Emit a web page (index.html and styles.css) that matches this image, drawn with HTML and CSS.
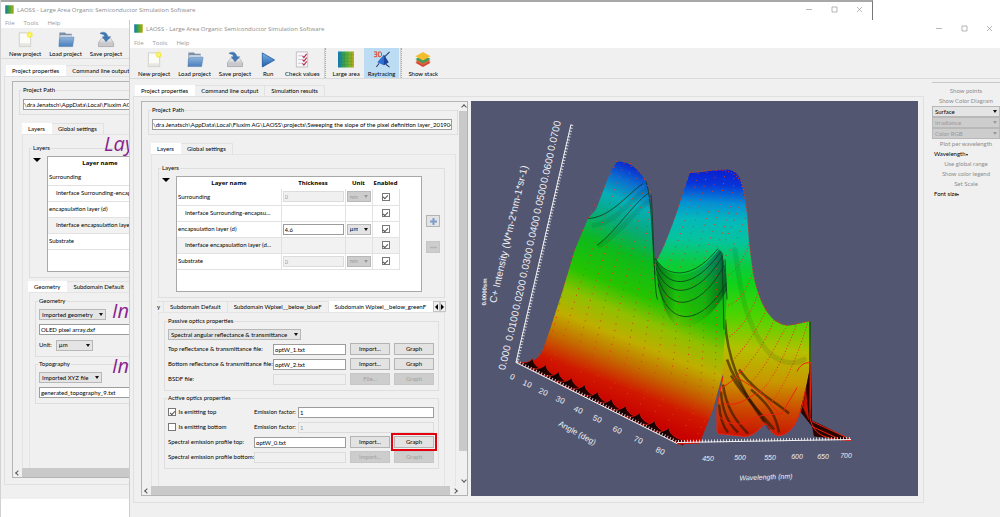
FILE: index.html
```
<!DOCTYPE html>
<html lang="en">
<head>
    <meta charset="utf-8">
    <title>LAOSS - Large Area Organic Semiconductor Simulation Software</title>
    <meta name="viewport" content="width=device-width, initial-scale=1.0">
    <link rel="stylesheet" href="styles.css">
</head>
<body>
    <!-- Shared icons -->
    <svg class="defs" width="0" height="0" aria-hidden="true">
        <defs>
            <linearGradient id="g-map" x1="0" x2="1"><stop offset="0" stop-color="#1377b8"/><stop offset=".35" stop-color="#2fa35c"/><stop offset=".7" stop-color="#7cb62c"/><stop offset="1" stop-color="#c9a81a"/></linearGradient>
            <linearGradient id="g-blue" x1="0" y1="0" x2="0" y2="1"><stop offset="0" stop-color="#7db5e6"/><stop offset="1" stop-color="#1d5fae"/></linearGradient>
            <linearGradient id="g-folder" x1="0" y1="0" x2="0" y2="1"><stop offset="0" stop-color="#8fb4dc"/><stop offset="1" stop-color="#4b7fbd"/></linearGradient>
            <linearGradient id="g-drive" x1="0" y1="0" x2="0" y2="1"><stop offset="0" stop-color="#f2f2f2"/><stop offset="1" stop-color="#a9a9ad"/></linearGradient>
            <radialGradient id="g-glow"><stop offset="0" stop-color="#fffbb0"/><stop offset=".5" stop-color="#f7ec3a"/><stop offset="1" stop-color="#f7ec3a" stop-opacity="0"/></radialGradient>
            <symbol id="i-new" viewBox="0 0 18 18">
                <path d="M3 2h12v14.500H3z" fill="#fbfbf8" stroke="#bdbdb8" stroke-width=".7"/>
                <path d="M3.500 13h11v3h-11z" fill="#e6e6e2"/>
                <circle cx="14" cy="4" r="4" fill="url(#g-glow)"/>
            </symbol>
            <symbol id="i-load" viewBox="0 0 18 18">
                <path d="M2 1.500h6l1 1.500h6V13H2z" fill="#7a8ea6"/>
                <path d="M3 4.500h12v3H3z" fill="#dfe6ee"/>
                <path d="M4 6.500h13.500l-1.500 10H1.500L2 9z" fill="url(#g-folder)" stroke="#4473aa" stroke-width=".5"/>
            </symbol>
            <symbol id="i-save" viewBox="0 0 18 18">
                <path d="M4 8h10l3 4.500v4H1v-4z" fill="url(#g-drive)" stroke="#8d8d92" stroke-width=".5"/>
                <path d="M1.500 13h15v3h-15z" fill="#c9c9cd"/>
                <path d="M3 2c4-2 7.500 0 8 4h3l-5 5.500L5 6h2.500C7 4 5.500 3 3 3z" fill="#3f78b5" stroke="#2a5c94" stroke-width=".4"/>
            </symbol>
            <symbol id="i-run" viewBox="0 0 18 18">
                <path d="M3 2l13 7.500L3 17z" fill="url(#g-blue)" stroke="#1c5196" stroke-width=".8"/>
            </symbol>
            <symbol id="i-check" viewBox="0 0 18 18">
                <path d="M3 1h12v16H3z" fill="#f7f7f9" stroke="#a9a9b0" stroke-width=".7"/>
                <path d="M5 5h4M5 9h4M5 13h4" stroke="#c8c8d2" stroke-width="1"/>
                <path d="M9.500 5l1.500 2 3-4M9.500 9l1.500 2 3-4M9.500 13l1.500 2 3-4" fill="none" stroke="#b3284a" stroke-width="1.200"/>
            </symbol>
            <symbol id="i-area" viewBox="0 0 18 18">
                <path d="M.500 .500h17v17H.500z" fill="url(#g-map)"/>
                <path d="M4 1v16M7.500 1v16M11 1v16M14.500 1v16M1 4h16M1 7.500h16M1 11h16M1 14.500h16" stroke="#3f7a2c" stroke-width=".4" opacity=".7"/>
            </symbol>
            <symbol id="i-ray" viewBox="0 0 18 18">
                <path d="M11 4l5 8-5 3-7-3z" fill="#2f6fd0"/>
                <path d="M11 4l5 8-5 3z" fill="#1a479c"/>
                <path d="M17 1l-5 5M6 13l-3 4M13 14l4 3" stroke="#2d3a63" stroke-width="1.100"/>
                <path d="M.500 1h3v5h-3M1 3.500h2.500M5.500 1v5h1.500L8.500 5V2L7 1z" fill="none" stroke="#d8432c" stroke-width="1"/>
            </symbol>
            <symbol id="i-stack" viewBox="0 0 18 18">
                <path d="M1 12.500l8-4 8 4-8 4.500z" fill="#d5402f"/>
                <path d="M1 10.500l8-4 8 4-8 4.500z" fill="#d9673c"/>
                <path d="M1 8.500l8-4 8 4-8 4.500z" fill="#3c9d5d"/>
                <path d="M1 5.500l8-4.500 8 4.500-8 4.500z" fill="#f3bd2d"/>
            </symbol>
        </defs>
    </svg>

    <div class="desktop">
        <!-- Window at the back -->
        <section class="window window-back">
            <header class="title-bar">
                <svg class="logo"><use href="#i-area"/></svg>
                <span class="title">LAOSS - Large Area Organic Semiconductor Simulation Software</span>
                <div class="window-buttons">
                    <button aria-label="Minimize"><svg viewBox="0 0 7 7"><path d="M0 3.500h6"/></svg></button>
                    <button aria-label="Maximize"><svg viewBox="0 0 7 7"><path d="M1 1h5v5H1z"/></svg></button>
                    <button aria-label="Close"><svg viewBox="0 0 7 7"><path d="M1 1l5 5M6 1L1 6"/></svg></button>
                </div>
            </header>
            <nav class="menu-bar"><button>File</button><button>Tools</button><button>Help</button></nav>
            <div class="toolbar">
                <button class="tool"><svg><use href="#i-new"/></svg>New project</button>
                <button class="tool"><svg><use href="#i-load"/></svg>Load project</button>
                <button class="tool"><svg><use href="#i-save"/></svg>Save project</button>
                <button class="tool" aria-label="Run"><svg><use href="#i-run"/></svg></button>
            </div>
            <div class="window-body">
                <div class="main">
                    <div class="tabs"><button class="tab active">Project properties</button><button class="tab">Command line output</button></div>
                    <div class="main-pane">
                        <div class="scroll-area">
                            <div class="scroll-content">
                                <fieldset class="group path-group">
                                    <legend>Project Path</legend>
                                    <input class="field" aria-label="Project path" value="\dra Jenatsch\AppData\Local\Fluxim AG\L">
                                </fieldset>
                                <div class="tabs inner-tabs"><button class="tab active">Layers</button><button class="tab">Global settings</button></div>
                                <div class="inner-pane">
                                    <fieldset class="group layers-group">
                                        <legend>Layers</legend>
                                        <button class="collapse" aria-label="Collapse"></button>
                                        <div class="table-frame">
                                            <table>
                                                <thead><tr><th class="col-name">Layer name</th></tr></thead>
                                                <tbody>
                                                    <tr><td>Surrounding</td></tr>
                                                    <tr><td class="sub">Interface Surrounding-encapsu...</td></tr>
                                                    <tr><td>encapsulation layer (d)</td></tr>
                                                    <tr class="selected"><td class="sub">Interface encapsulation layer (d...</td></tr>
                                                    <tr><td>Substrate</td></tr>
                                                </tbody>
                                            </table>
                                        </div>
                                    </fieldset>
                                    <div class="tabs sub-tabs"><button class="tab active">Geometry</button><button class="tab">Subdomain Default</button></div>
                                    <div class="sub-pane">
                                        <fieldset class="group">
                                            <legend>Geometry</legend>
                                            <div class="stack">
                                                <span class="select"><select aria-label="Geometry source"><option>Imported geometry</option></select></span>
                                                <input class="field" aria-label="Geometry file" value="OLED pixel array.dxf">
                                                <div class="row"><label for="geo-unit">Unit:</label><span class="select unit-select"><select id="geo-unit"><option>µm</option></select></span></div>
                                            </div>
                                        </fieldset>
                                        <fieldset class="group">
                                            <legend>Topography</legend>
                                            <div class="stack">
                                                <span class="select"><select aria-label="Topography source"><option>Imported XYZ file</option></select></span>
                                                <input class="field" aria-label="Topography file" value="generated_topography_9.txt">
                                            </div>
                                        </fieldset>
                                    </div>
                                </div>
                            </div>
                            <div class="bar-h"><span class="chevron left"></span><span class="thumb"></span></div>
                        </div>
                    </div>
                </div>
            </div>
            <span class="note note-layers">Lay</span>
            <span class="note note-geometry">In</span>
            <span class="note note-topography">In</span>
        </section>

        <!-- Window in front -->
        <section class="window window-front">
            <header class="title-bar">
                <svg class="logo"><use href="#i-area"/></svg>
                <span class="title">LAOSS - Large Area Organic Semiconductor Simulation Software</span>
                <div class="window-buttons">
                    <button aria-label="Minimize"><svg viewBox="0 0 7 7"><path d="M0 3.500h6"/></svg></button>
                    <button aria-label="Maximize"><svg viewBox="0 0 7 7"><path d="M1 1h5v5H1z"/></svg></button>
                    <button aria-label="Close"><svg viewBox="0 0 7 7"><path d="M1 1l5 5M6 1L1 6"/></svg></button>
                </div>
            </header>
            <nav class="menu-bar"><button>File</button><button>Tools</button><button>Help</button></nav>
            <div class="toolbar">
                <button class="tool"><svg><use href="#i-new"/></svg>New project</button>
                <button class="tool"><svg><use href="#i-load"/></svg>Load project</button>
                <button class="tool"><svg><use href="#i-save"/></svg>Save project</button>
                <button class="tool"><svg><use href="#i-run"/></svg>Run</button>
                <button class="tool"><svg><use href="#i-check"/></svg>Check values</button>
                <span class="separator"></span>
                <button class="tool"><svg><use href="#i-area"/></svg>Large area</button>
                <button class="tool on"><svg><use href="#i-ray"/></svg>Raytracing</button>
                <span class="separator"></span>
                <button class="tool"><svg><use href="#i-stack"/></svg>Show stack</button>
            </div>

            <div class="window-body">
                <div class="main">
                    <div class="tabs"><button class="tab active">Project properties</button><button class="tab">Command line output</button><button class="tab">Simulation results</button></div>
                    <div class="main-pane">
                        <div class="scroll-area">
                            <div class="scroll-content">
                                <fieldset class="group path-group">
                                    <legend>Project Path</legend>
                                    <input class="field" aria-label="Project path" value="\dra Jenatsch\AppData\Local\Fluxim AG\LAOSS\projects\Sweeping the slope of the pixel definition layer_20190430\">
                                </fieldset>
                                <div class="tabs inner-tabs"><button class="tab active">Layers</button><button class="tab">Global settings</button></div>
                                <div class="inner-pane">
                                    <fieldset class="group layers-group">
                                        <legend>Layers</legend>
                                        <button class="collapse" aria-label="Collapse"></button>
                                        <div class="table-frame">
                                            <table>
                                                <thead><tr><th class="col-name">Layer name</th><th class="col-thick">Thickness</th><th class="col-unit">Unit</th><th class="col-on">Enabled</th></tr></thead>
                                                <tbody>
                                                    <tr><td>Surrounding</td><td><input class="field" aria-label="Surrounding thickness" value="0" disabled></td><td><span class="select off"><select aria-label="Surrounding unit" disabled><option>nm</option></select></span></td><td><input type="checkbox" aria-label="Enable Surrounding" checked></td></tr>
                                                    <tr><td class="sub">Interface Surrounding-encapsu...</td><td></td><td></td><td><input type="checkbox" aria-label="Enable Surrounding interface" checked></td></tr>
                                                    <tr><td>encapsulation layer (d)</td><td><input class="field" aria-label="Encapsulation thickness" value="4.6"></td><td><span class="select"><select aria-label="Encapsulation unit"><option>µm</option></select></span></td><td><input type="checkbox" aria-label="Enable encapsulation" checked></td></tr>
                                                    <tr class="selected"><td class="sub">Interface encapsulation layer (d...</td><td></td><td></td><td><input type="checkbox" aria-label="Enable encapsulation interface" checked></td></tr>
                                                    <tr><td>Substrate</td><td><input class="field" aria-label="Substrate thickness" value="0" disabled></td><td><span class="select off"><select aria-label="Substrate unit" disabled><option>nm</option></select></span></td><td><input type="checkbox" aria-label="Enable Substrate" checked></td></tr>
                                                </tbody>
                                            </table>
                                        </div>
                                        <div class="table-buttons">
                                            <button class="btn" aria-label="Add layer"><svg viewBox="0 0 7 7"><path d="M3.500 0v7M0 3.500h7" stroke="#7d9ccd" stroke-width="2"/></svg></button>
                                            <button class="btn" aria-label="Remove layer" disabled><svg viewBox="0 0 7 7"><path d="M0 3.500h7" stroke="#b4b4b4" stroke-width="1.500"/></svg></button>
                                        </div>
                                    </fieldset>
                                    <div class="tabs sub-tabs">
                                        <button class="tab cut">y</button><button class="tab">Subdomain Default</button><button class="tab">Subdomain Wpixel__below_blueF</button><button class="tab active">Subdomain Wpixel__below_greenF</button>
                                        <button class="scroll-tab" aria-label="Previous tab"><span class="arrow-left"></span></button><button class="scroll-tab" aria-label="Next tab"><span class="arrow-right"></span></button>
                                    </div>
                                    <div class="sub-pane">
                                        <fieldset class="group">
                                            <legend>Passive optics properties</legend>
                                            <div class="stack">
                                                <span class="select"><select aria-label="Passive optics model"><option>Spectral angular reflectance &amp; transmittance</option></select></span>
                                                <div class="row"><label class="label-wide" for="top-file">Top reflectance &amp; transmittance file:</label><input class="field" id="top-file" value="optW_1.txt"><button class="btn">Import...</button><button class="btn">Graph</button></div>
                                                <div class="row"><label class="label-wide" for="bottom-file">Bottom reflectance &amp; transmittance file:</label><input class="field" id="bottom-file" value="optW_2.txt"><button class="btn">Import...</button><button class="btn">Graph</button></div>
                                                <div class="row"><label class="label-wide" for="bsdf-file">BSDF file:</label><input class="field" id="bsdf-file" disabled><button class="btn" disabled>File...</button><button class="btn" disabled>Graph</button></div>
                                            </div>
                                        </fieldset>
                                        <fieldset class="group">
                                            <legend>Active optics properties</legend>
                                            <div class="stack">
                                                <div class="row"><label class="label-mid"><input type="checkbox" checked> Is emitting top</label><label class="label-factor" for="factor-top">Emission factor:</label><input class="field" id="factor-top" value="1"></div>
                                                <div class="row"><label class="label-mid"><input type="checkbox"> Is emitting bottom</label><label class="label-factor" for="factor-bottom">Emission factor:</label><input class="field" id="factor-bottom" value="1" disabled></div>
                                                <div class="row"><label class="label-mid" for="profile-top">Spectral emission profile top:</label><input class="field" id="profile-top" value="optW_0.txt"><button class="btn">Import...</button><button class="btn marked">Graph</button></div>
                                                <div class="row"><label class="label-mid" for="profile-bottom">Spectral emission profile bottom:</label><input class="field" id="profile-bottom" disabled><button class="btn" disabled>Import...</button><button class="btn" disabled>Graph</button></div>
                                            </div>
                                        </fieldset>
                                    </div>
                                </div>
                            </div>
                            <div class="bar-v"><span class="chevron up"></span><span class="thumb"></span><span class="chevron down"></span></div>
                            <div class="bar-h"><span class="chevron left"></span><span class="thumb"></span><span class="chevron right"></span></div>
                        </div>

                        <!-- 3D spectrum plot -->
                        <div class="viewer">
                            <svg viewBox="471 101 447 396" preserveAspectRatio="xMidYMid slice">
                                <defs>
                                    <linearGradient id="s1" gradientUnits="userSpaceOnUse" x1="620" y1="162" x2="534" y2="378">
                                        <stop offset="0" stop-color="#0a2bd0"/><stop offset=".07" stop-color="#0b6fd0"/><stop offset=".15" stop-color="#06aeb8"/><stop offset=".25" stop-color="#08ab78"/><stop offset=".36" stop-color="#0dba1c"/><stop offset=".5" stop-color="#25c400"/><stop offset=".6" stop-color="#8fc000"/><stop offset=".7" stop-color="#bfae00"/><stop offset=".8" stop-color="#c46a00"/><stop offset=".9" stop-color="#d01800"/><stop offset="1" stop-color="#c80000"/>
                                    </linearGradient>
                                    <linearGradient id="s2" gradientUnits="userSpaceOnUse" x1="740" y1="170" x2="725" y2="440">
                                        <stop offset="0" stop-color="#0a1ccf"/><stop offset=".06" stop-color="#0734d8"/><stop offset=".13" stop-color="#0590d4"/><stop offset=".19" stop-color="#04b8bc"/><stop offset=".27" stop-color="#05c49c"/><stop offset=".36" stop-color="#0ccc3c"/><stop offset=".42" stop-color="#0fd21a"/><stop offset=".54" stop-color="#4ed400"/><stop offset=".66" stop-color="#b4c000"/><stop offset=".78" stop-color="#c99600"/><stop offset=".88" stop-color="#cc4a00"/><stop offset="1" stop-color="#c80a00"/>
                                    </linearGradient>
                                    <linearGradient id="s3" gradientUnits="userSpaceOnUse" x1="655" y1="250" x2="725" y2="250">
                                        <stop offset="0" stop-color="#003c10" stop-opacity=".6"/><stop offset=".3" stop-color="#003c10" stop-opacity="0"/><stop offset=".7" stop-color="#003c10" stop-opacity=".1"/><stop offset="1" stop-color="#003c10" stop-opacity=".6"/>
                                    </linearGradient>
                                    <linearGradient id="s4" x1="0" y1="0" x2="1" y2=".4">
                                        <stop offset="0" stop-color="#5a0000"/><stop offset=".4" stop-color="#140000"/><stop offset="1" stop-color="#4a0000"/>
                                    </linearGradient>
                                    <g id="tooth">
                                        <path d="M0 0C7 1 12 0 16-4C16 2 22 7 32 9L30 14Z" fill="url(#s4)"/>
                                        <path d="M0 0C7 1 12 0 16-4C16 2 22 7 32 9" fill="none" stroke="#e01b10" stroke-width=".7"/>
                                    </g>
                                </defs>

                                <!-- rear ridge -->
                                <path d="M690 173C700 174 712 170 727 170C737 171 741 178 743 189L747 212L749 243L753 273C758 300 768 324 787 326C797 326 803 322 810 322L811 363L806 388L802 407C797 422 792 434 780 436C773 437 769 428 766 424C759 428 756 436 745 437L718 434L717 408L723 377L700 330L656 262C666 246 679 208 684 190Z" fill="url(#s2)"/>
                                <g class="shade">
                                    <path d="M735 250C740 290 746 325 766 350C778 364 794 366 804 360"/>
                                </g>
                                <g class="folds">
                                    <path d="M725 320C727 362 744 396 764 422"/>
                                    <path d="M727 360C735 385 752 400 770 430"/>
                                    <path d="M723 385C726 408 736 422 748 434"/>
                                    <path d="M721 392C722 412 728 424 738 433"/>
                                    <path d="M719 405C720 418 722 426 728 433"/>
                                    <path d="M739 370C756 394 776 402 789 414"/>
                                    <path d="M751 390C768 404 776 416 779 433"/>
                                    <path d="M731 376C742 396 760 412 774 430"/>
                                </g>
                                <path d="M806 388L800 412L812 427L814 437L851 441C839 434 826 427 812 421L811 363Z" fill="#2a0400"/>
                                <path d="M806 390L803 408L809 421Z" fill="#c41400"/>
                                <path d="M810 322V410" stroke="#174a12" stroke-width="1.500"/>
                                <g class="mesh">
                                    <path d="M718 434L745 437C756 436 759 428 766 424C769 428 773 437 780 436C792 434 797 422 802 407L806 388"/>
                                    <path d="M797 372C800 366 803 363 811 363L810 418C813 434 822 440 851 441"/>
                                    <path d="M717 415C730 428 742 426 752 420C762 414 770 416 782 414L797 388"/>
                                    <path d="M723 377L717 408V432M812 422L851 440M812 427L838 439M722 388C730 384 738 376 741 371"/>
                                    <path d="M724 404C740 408 750 396 757 394M737 378L752 387L762 394L778 413"/>
                                </g>
                                <g class="dots">
                                    <path d="M690 173C678 205 672 230 657 262"/>
                                    <path d="M698 174C690 210 682 230 668 268"/>
                                    <path d="M707 173C700 208 692 232 680 270"/>
                                    <path d="M716 171C711 208 704 230 692 270"/>
                                    <path d="M725 170C722 208 712 232 704 262"/>
                                    <path d="M734 172C734 206 724 230 716 250"/>
                                    <path d="M742 187C740 210 732 226 724 244"/>
                                    <path d="M747 212C742 230 736 244 726 256"/>
                                </g>
                                <g class="dots dense">
                                    <path d="M749 243C745 258 736 272 728 276"/>
                                    <path d="M753 273C745 292 742 300 728 306"/>
                                    <path d="M758 295C748 320 740 330 728 338"/>
                                    <path d="M766 311C752 340 744 348 732 362"/>
                                    <path d="M774 321C762 350 750 362 740 375"/>
                                    <path d="M787 326C772 352 764 372 748 385"/>
                                    <path d="M797 324C786 352 774 380 758 395"/>
                                    <path d="M808 322C800 350 784 390 770 404"/>
                                    <path d="M690 173C712 171 737 164 743 189S748 240 753 273C758 300 770 324 787 326L810 322"/>
                                </g>

                                <!-- front ridge -->
                                <path d="M617 162C628 161 640 170 646 182C652 196 652 235 655 258C668 282 694 282 719 250C725 252 726 285 727 290L725 333L722 377L713 410L700 443L677 444L517 363C530 363 538 362 543 350L550 330L563 290L575 250L588 219L596 210L611 171Z" fill="url(#s1)"/>
                                <path d="M655 258C668 282 694 282 719 250C725 252 726 285 727 290C715 315 696 328 682 328C668 326 658 300 655 258Z" fill="url(#s3)"/>
                                <g class="shade">
                                    <path d="M594 226C618 222 630 200 646 190M600 246C622 232 634 212 648 202"/>
                                </g>
                                <g class="ridges">
                                    <path d="M588 219C610 218 625 197 643 184M597 246C618 230 632 205 649 193"/>
                                    <path d="M646 182C652 200 652 240 655 275M651 195C654 230 654 300 658 300" />
                                    <path d="M655 258C664 276 690 284 718 249M656 263C668 290 694 290 721 252M656 268C668 302 698 298 723 256M657 275C668 318 702 308 724 266M658 284C668 330 702 326 726 284"/>
                                    <path d="M722 253L724 330M725 260L727 300"/>
                                </g>
                                <g class="dots">
                                    <path d="M617 162C606 185 575 235 563 290S546 352 530 362"/>
                                    <path d="M624 164C610 205 584 270 572 310S560 350 550 362"/>
                                    <path d="M631 167C620 215 597 270 586 318S576 350 564 369"/>
                                    <path d="M638 172C630 220 610 275 600 325S590 360 578 376"/>
                                    <path d="M644 180C640 230 622 290 615 330S604 366 593 384"/>
                                    <path d="M650 192C648 245 636 300 630 340S618 378 608 392"/>
                                    <path d="M655 258C650 300 648 325 644 350S632 386 624 400"/>
                                    <path d="M668 290C664 310 662 335 658 360S648 392 638 408"/>
                                    <path d="M680 290C676 320 676 345 672 370S662 402 653 416"/>
                                    <path d="M692 285C690 325 690 350 686 378S676 410 668 422"/>
                                    <path d="M704 275C704 320 704 355 700 385S692 414 684 430"/>
                                    <path d="M716 262C717 320 717 360 713 390S704 420 696 438"/>
                                    <path d="M617 162C634 158 648 180 650 195"/>
                                </g>
                                <g>
                                    <use href="#tooth" x="517" y="363"/>
                                    <use href="#tooth" x="530" y="369"/>
                                    <use href="#tooth" x="543" y="376"/>
                                    <use href="#tooth" x="556" y="382"/>
                                    <use href="#tooth" x="569" y="389"/>
                                    <use href="#tooth" x="582" y="396"/>
                                    <use href="#tooth" x="596" y="403"/>
                                    <use href="#tooth" x="610" y="410"/>
                                    <use href="#tooth" x="624" y="417"/>
                                    <use href="#tooth" x="639" y="425"/>
                                    <use href="#tooth" x="653" y="432"/>
                                </g>
                                <path d="M677 444L700 443" stroke="#d80f00" stroke-width="2"/>

                                <!-- axes -->
                                <g class="axis">
                                    <path d="M516 363L571 125M516 363L677 444M677 443L851 440"/>
                                    <path class="ticks" d="M517 363L572 125"/>
                                    <path class="ticks" d="M517 362L678 443"/>
                                    <path class="ticks" d="M678 442L851 439"/>
                                </g>
                                <g class="numbers">
                                    <text transform="translate(505 371) rotate(-77)">0.000</text>
                                    <text transform="translate(512 342) rotate(-77)">0.0100</text>
                                    <text transform="translate(519 311) rotate(-77)">0.0200</text>
                                    <text transform="translate(526 279) rotate(-77)">0.0300</text>
                                    <text transform="translate(533 247) rotate(-77)">0.0400</text>
                                    <text transform="translate(540 215) rotate(-77)">0.0500</text>
                                    <text transform="translate(547 184) rotate(-77)">0.0600</text>
                                    <text transform="translate(554 152) rotate(-77)">0.0700</text>
                                    <text transform="translate(496 304) rotate(-77)">C+ Intensity (W*m-2*nm-1*sr-1)</text>
                                </g>
                                <g class="small-numbers">
                                    <text transform="translate(486 306) rotate(-88)">0.0000sm</text>
                                </g>
                                <g class="angles">
                                    <text transform="translate(512 378) rotate(25)" text-anchor="middle" dy="2">0</text>
                                    <text transform="translate(527 385) rotate(25)" text-anchor="middle" dy="2">10</text>
                                    <text transform="translate(543 393) rotate(25)" text-anchor="middle" dy="2">20</text>
                                    <text transform="translate(560 401) rotate(25)" text-anchor="middle" dy="2">30</text>
                                    <text transform="translate(578 411) rotate(25)" text-anchor="middle" dy="2">40</text>
                                    <text transform="translate(597 420) rotate(25)" text-anchor="middle" dy="2">50</text>
                                    <text transform="translate(617 431) rotate(25)" text-anchor="middle" dy="2">60</text>
                                    <text transform="translate(638 441) rotate(25)" text-anchor="middle" dy="2">70</text>
                                    <text transform="translate(660 452) rotate(25)" text-anchor="middle" dy="2">80</text>
                                    <text transform="translate(577 434) rotate(29)" text-anchor="middle" dy="2">Angle (deg)</text>
                                </g>
                                <g class="waves">
                                    <text x="708" y="461">450</text>
                                    <text x="740" y="460">500</text>
                                    <text x="770" y="460">550</text>
                                    <text x="797" y="459">600</text>
                                    <text x="823" y="459">650</text>
                                    <text x="846" y="458">700</text>
                                    <text transform="translate(766 480) rotate(-2)">Wavelength (nm)</text>
                                </g>
                            </svg>
                        </div>
                    </div>
                </div>

                <aside class="dock">
                    <button disabled>Show points</button>
                    <button disabled>Show Color Diagram</button>
                    <span class="select"><select aria-label="Plot type"><option>Surface</option></select></span>
                    <span class="select off"><select aria-label="Quantity" disabled><option>Irradiance</option></select></span>
                    <span class="select off"><select aria-label="Color mode" disabled><option>Color RGB</option></select></span>
                    <button disabled>Plot per wavelength</button>
                    <button class="menu-button">Wavelength</button>
                    <button disabled>Use global range</button>
                    <button disabled>Show color legend</button>
                    <button disabled>Set Scale</button>
                    <button class="menu-button">Font size</button>
                </aside>
            </div>
        </section>
    </div>
</body>
</html>
```
FILE: styles.css
```
* {
    box-sizing: border-box;
}

body {
    margin: 0;
    background: #fff;
    color: #000;
    font: 6px/8px Lato, "Liberation Sans", sans-serif;
}

button, input, select {
    font: inherit;
    color: inherit;
    margin: 0;
    padding: 0;
    border: 0;
    border-radius: 0;
    background: none;
}

.defs {
    position: absolute;
}

.desktop {
    position: relative;
    height: 100vh;
    overflow: hidden;
    border-left: 1px solid #d2d2d6;
}

/* Windows */
.window {
    position: absolute;
    display: flex;
    flex-direction: column;
    background: #f0f0f0;
}

.window-back {
    left: 0;
    top: 0;
    right: 127px;
    bottom: 18px;
    border-top: 2px solid #a8a8a8;
    border-right: 1px solid #777;
}

.window-front {
    left: 128px;
    top: 20px;
    right: 0;
    bottom: 0;
    border-left: 1px solid #ccc;
}

.title-bar {
    display: flex;
    align-items: center;
    gap: 3px;
    height: 17px;
    padding: 0 7px 0 4px;
    background: #fff;
    color: #8c8c8c;
    font-family: "Open Sans", "Noto Sans", sans-serif;
}

.window-back .title-bar {
    height: 15px;
    padding-right: 9px;
}

.logo {
    width: 9px;
    height: 9px;
}

.window-buttons {
    display: flex;
    gap: 18px;
    margin-left: auto;
}

.window-buttons button {
    width: 7px;
    height: 7px;
}

.window-buttons svg {
    display: block;
    fill: none;
    stroke: #999;
    stroke-width: .7;
}

.menu-bar {
    display: flex;
    gap: 9px;
    height: 11px;
    padding-left: 4px;
    background: #fff;
    color: #9a9a9a;
    font-family: "Open Sans", "Noto Sans", sans-serif;
}

.toolbar {
    display: flex;
    height: 31px;
    padding-left: 4px;
    border-bottom: 1px solid #dadada;
}

.tool {
    display: flex;
    flex-direction: column;
    align-items: center;
    gap: 2px;
    min-width: 22px;
    padding: 3px 4px 0;
}

.tool svg {
    width: 18px;
    height: 17px;
}

.tool.on {
    background: #bcdcf4;
}

.separator {
    width: 2px;
    margin: 0 2px 0 1px;
    border-left: 1px solid #d2d2d2;
    border-right: 1px dotted #aaa;
}

.window-body {
    flex: 1;
    display: flex;
    min-height: 0;
    padding: 6px 0 14px 3px;
}

.main {
    flex: 1;
    display: flex;
    flex-direction: column;
    min-width: 0;
}

/* Tabs */
.tabs {
    display: flex;
    height: 11px;
    padding-left: 2px;
}

.tab {
    padding: 0 6px;
    border: 1px solid #e2e2e2;
    border-width: 1px 1px 0 0;
    white-space: nowrap;
}

.tab.active {
    background: #fff;
    border-color: #fff;
}

.main-pane {
    flex: 1;
    display: flex;
    gap: 3px;
    min-height: 0;
    padding: 4px 5px 6px 7px;
    border: 1px solid #e0e0e0;
}

.scroll-area {
    display: grid;
    grid-template-columns: 1fr 8px;
    grid-template-rows: 1fr 9px;
    width: 327px;
    border: 1px solid #b4b4b4;
}

.scroll-content {
    display: flex;
    flex-direction: column;
    min-width: 0;
    min-height: 0;
    padding: 4px 1px 0 6px;
}

.window-back .scroll-content {
    grid-column: 1 / 3;
    padding-right: 9px;
}

/* Scroll bars */
.bar-v, .bar-h {
    display: flex;
    background: #f0f0f0;
}

.bar-v {
    flex-direction: column;
    padding-bottom: 2px;
}

.bar-h {
    grid-column: 1 / 3;
    padding-right: 8px;
}

.bar-v .thumb {
    flex: 0 0 340px;
    background: #c9c9c9;
}

.bar-v .down {
    margin-top: auto;
}

.bar-h .thumb {
    flex: 1;
    background: #c9c9c9;
}

.chevron {
    display: grid;
    place-items: center;
    width: 9px;
    height: 9px;
}

.chevron::before {
    content: "";
    width: 3px;
    height: 3px;
    border: 1px solid #555;
    border-width: 1px 0 0 1px;
}

.up::before {
    transform: rotate(45deg);
}

.down::before {
    transform: rotate(225deg);
}

.left::before {
    transform: rotate(-45deg);
}

.right::before {
    transform: rotate(135deg);
}

/* Groups */
.group {
    min-width: 0;
    margin: 0;
    padding: 4px 4px 5px 3px;
    border: 1px solid #dedede;
}

.group + .group {
    margin-top: 3px;
}

.group legend {
    margin-left: -1px;
    padding: 0 1px;
    line-height: 8px;
}

.path-group {
    padding: 5px 5px 4px 3px;
}

.path-group .field {
    width: 100%;
    padding: 0;
}

.inner-tabs {
    margin-top: 8px;
    padding-left: 3px;
}

.inner-tabs .tab {
    padding: 0 6px;
}

.inner-pane {
    flex: 1;
    display: flex;
    flex-direction: column;
    margin: 0 2px 0 3px;
    padding: 9px 10px 0 6px;
    border: 1px solid #e4e4e4;
    border-bottom: 0;
}

.layers-group {
    display: grid;
    grid-template-columns: 10px 246px 14px;
    gap: 4px;
}

.collapse {
    width: 0;
    height: 0;
    margin: 2px 0 0;
    border: 4px solid transparent;
    border-top-color: #000;
    border-bottom: 0;
}

.table-frame {
    height: 116px;
    border: 1px solid #a8a8a8;
    background: #fff;
}

.table-buttons {
    display: grid;
    align-content: center;
    gap: 14px;
}

.table-buttons .btn {
    width: 14px;
    height: 12px;
}

.table-buttons svg {
    width: 7px;
    height: 7px;
}

table {
    border-collapse: collapse;
    table-layout: fixed;
}

th {
    height: 12px;
    padding: 0;
    font-family: "Open Sans", "Noto Sans", sans-serif;
}

td {
    height: 16px;
    padding: 0 1px;
    border: 1px solid #e2e2e2;
    border-left: 0;
    white-space: nowrap;
}

tbody tr:first-child td {
    border-top: 0;
}

td:last-child {
    text-align: center;
}

td:first-child {
    text-align: left;
}

td.sub {
    padding-left: 8px;
}

td .field, td .select {
    width: 100%;
}

.selected {
    background: #f2f2f2;
}

.col-name {
    width: 104px;
}

.col-thick {
    width: 64px;
}

.col-unit, .col-on {
    width: 27px;
}

.sub-tabs {
    margin: 3px -1px 0 -1px;
    padding-left: 0;
}

.sub-tabs .tab {
    padding: 0 6px;
}

.sub-tabs .tab.cut {
    padding: 0 3px 0 0;
}

.scroll-tab {
    display: grid;
    place-items: center;
    width: 8px;
    border: 1px solid #c4c4c4;
}

.arrow-left, .arrow-right {
    border: 3px solid transparent;
}

.arrow-left {
    border-right-color: #000;
    border-left: 0;
}

.arrow-right {
    border-left-color: #000;
    border-right: 0;
}

.sub-pane {
    flex: 1;
    padding: 4px 5px 0;
    border: 1px solid #e4e4e4;
    border-bottom: 0;
}

/* Controls */
.field {
    display: block;
    min-width: 0;
    height: 11px;
    padding: 0 1px;
    border: 1px solid #9c9c9c;
    background: #fff;
}

.field:disabled {
    border-color: #dcdcdc;
    background: #f0f0f0;
    color: #9a9a9a;
}

.btn {
    display: grid;
    place-items: center;
    width: 40px;
    height: 12px;
    border: 1px solid #b4b4b4;
    background: #e3e3e3;
}

.btn:disabled {
    border-color: #c6c6c6;
    background: #cdcdcd;
    color: #a0a0a0;
}

.marked {
    outline: 2px solid #e3000f;
    outline-offset: 1px;
}

.select {
    position: relative;
    display: inline-block;
    height: 11px;
}

.select select {
    appearance: none;
    display: block;
    width: 100%;
    height: 11px;
    padding: 0 12px 0 2px;
    border: 1px solid #b8b8b8;
    background: #e4e4e4;
}

.select::after {
    content: "";
    position: absolute;
    right: 3px;
    top: 4px;
    border: 2px solid transparent;
    border-top: 3px solid #111;
    border-bottom: 0;
    pointer-events: none;
}

.select.off select {
    background: #cdcdcd;
    color: #999;
    opacity: 1;
}

.off::after {
    border-top-color: #999;
}

input[type="checkbox"] {
    appearance: none;
    display: inline-grid;
    place-items: center;
    width: 8px;
    height: 8px;
    border: 1px solid #777;
    background: #fff;
    vertical-align: middle;
}

input[type="checkbox"]:checked::before {
    content: "";
    width: 4px;
    height: 2px;
    border: 1px solid #555;
    border-width: 0 0 1px 1px;
    transform: rotate(-45deg);
}

.stack {
    display: flex;
    flex-direction: column;
    align-items: flex-start;
    gap: 3px;
}

.window-back .stack {
    gap: 4px;
}

.stack > .field {
    width: 100%;
}

.row {
    display: flex;
    align-items: center;
    gap: 4px;
    width: 100%;
    height: 12px;
}

.row .field {
    flex: 1;
}

.row label {
    white-space: nowrap;
}

.label-wide {
    width: 101px;
}

.label-mid {
    width: 82px;
}

.label-factor {
    width: 40px;
}

.label-mid input {
    margin-right: 1px;
}

.unit-select {
    width: 37px;
}

/* Viewer */
.viewer {
    flex: 1;
    min-width: 0;
    background: #525670;
}

.viewer svg {
    display: block;
    width: 100%;
    height: 100%;
}

.viewer text {
    font-family: "Liberation Sans", Arial, sans-serif;
    fill: #f0f0f4;
}

.numbers text {
    font-size: 10px;
}

.small-numbers text {
    font-size: 6px;
    font-weight: bold;
}

.angles text {
    font-size: 8px;
}

.waves text {
    font-size: 7px;
    font-style: italic;
    text-anchor: middle;
}

.axis path {
    fill: none;
    stroke: #f2f2f2;
    stroke-width: 1;
}

.axis .ticks {
    stroke-width: 3;
    stroke-dasharray: 1 2;
    opacity: .8;
}

.mesh path {
    fill: none;
    stroke: #ee2010;
    stroke-width: 1;
}

.dots path {
    fill: none;
    stroke: #e03c14;
    stroke-width: 1.200;
    stroke-linecap: round;
    stroke-dasharray: 0 7;
}

.dots.dense path {
    stroke-dasharray: 0 3;
}

.folds path {
    fill: none;
    stroke: #2a1400;
    stroke-width: 2.500;
    opacity: .6;
}

.shade path {
    fill: none;
    stroke: #0a4020;
    stroke-width: 5;
    stroke-linecap: round;
    opacity: .12;
}

.ridges path {
    fill: none;
    stroke: #0c3a1c;
    stroke-width: 1;
    opacity: .8;
}

/* Dock on the right */
.dock {
    display: flex;
    flex-direction: column;
    align-self: flex-start;
    width: 68px;
    margin: -3px 0 0 8px;
    padding-top: 3px;
    border-top: 1px solid #c8c8c8;
}

.dock button {
    height: 10px;
    color: #8e8e8e;
}

.dock .menu-button {
    padding-left: 2px;
    color: #000;
    text-align: left;
}

.menu-button::after {
    content: "";
    display: inline-block;
    border: 1px solid transparent;
    border-top: 2px solid #111;
    border-bottom: 0;
}

/* Notes over the back window */
.note {
    position: absolute;
    color: #8a1f8f;
    font: italic 20px/24px "Open Sans", "Noto Sans", sans-serif;
}

.note-layers {
    left: 103px;
    top: 130px;
}

.note-geometry {
    left: 111px;
    top: 297px;
}

.note-topography {
    left: 111px;
    top: 352px;
}
```
